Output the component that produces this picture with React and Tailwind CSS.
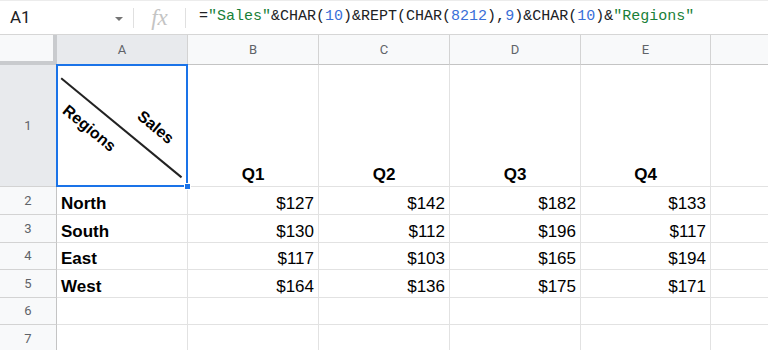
import React from 'react';

const cols = ['A', 'B', 'C', 'D', 'E'];

const data = [
  ['North', '$127', '$142', '$182', '$133'],
  ['South', '$130', '$112', '$196', '$117'],
  ['East', '$117', '$103', '$165', '$194'],
  ['West', '$164', '$136', '$175', '$171'],
];

const rowHeights = ['h-[28px]', 'h-[28px]', 'h-[27px]', 'h-[28px]', 'h-[27px]', 'h-[28px]'];

const cellFont = { fontFamily: '"Liberation Sans", Arial, sans-serif' };
const uiFont = { fontFamily: 'Roboto, "Liberation Sans", sans-serif' };

function FormulaBar() {
  return (
    <div className="flex h-[35px] items-center border-t border-b border-t-[#ececec] border-b-[#d6d6d6] bg-white">
      {/* name box */}
      <div className="flex w-[133px] items-center pl-[10px] pr-[10px]" style={uiFont}>
        <span className="text-[17px] text-[#202124]">A1</span>
        <span className="ml-auto mt-[2px] h-0 w-0 border-x-[4px] border-t-[4px] border-x-transparent border-t-[#757575]" />
      </div>
      <div className="h-[20px] w-px bg-[#e0e0e0]" />
      <div className="flex w-[51px] justify-center">
        <span
          className="text-[23px] italic leading-none text-[#c4c4c4]"
          style={{ fontFamily: '"Liberation Serif", serif' }}
        >
          fx
        </span>
      </div>
      <div className="h-[20px] w-px bg-[#e0e0e0]" />
      <div
        className="pl-[13px] text-[15px] whitespace-nowrap text-[#202124]"
        style={{ fontFamily: '"Liberation Mono", "DejaVu Sans Mono", monospace' }}
      >
        =<span className="text-[#188038]">"Sales"</span>&amp;CHAR(<span className="text-[#3a6fd8]">10</span>)&amp;REPT(CHAR(
        <span className="text-[#3a6fd8]">8212</span>),<span className="text-[#3a6fd8]">9</span>)&amp;CHAR(
        <span className="text-[#3a6fd8]">10</span>)&amp;<span className="text-[#188038]">"Regions"</span>
      </div>
    </div>
  );
}

function DiagonalCell() {
  return (
    <div className="relative h-full border-r border-b border-[#e2e2e2] bg-white">
      <div
        className="absolute left-[65px] top-[62px] w-[156px] -translate-x-1/2 -translate-y-1/2 rotate-[39.5deg] text-[16px] font-bold text-black"
        style={cellFont}
      >
        <div className="flex h-[42px] items-center justify-end pr-[31px]">Sales</div>
        <div className="flex h-[2px] items-center">
          <div className="h-[2px] w-full bg-[#222]" />
        </div>
        <div className="flex h-[40px] items-center pl-[22px]">Regions</div>
      </div>
      {/* selection */}
      <div className="pointer-events-none absolute -left-px -top-px -right-px -bottom-px border-2 border-[#1a73e8]" />
      <div className="absolute -right-[4px] -bottom-[4px] h-[7px] w-[7px] border border-white bg-[#1a73e8]" />
    </div>
  );
}

export default function App() {
  return (
    <div className="h-[350px] w-[768px] overflow-hidden bg-white">
      <FormulaBar />

      <div className="grid grid-cols-[57px_131px_131px_131px_131px_130px_1fr]">
        {/* column headers */}
        <div className="h-[30px] border-r-4 border-b-4 border-[#c9cbce] bg-[#f8f9fa]" />
        {cols.map((c) => (
          <div
            key={c}
            className={`flex h-[30px] items-center justify-center border-r border-b border-r-[#d3d3d3] border-b-[#c4c4c4] text-[13px] text-[#5f6368] ${
              c === 'A' ? 'bg-[#e8eaed]' : 'bg-[#f8f9fa]'
            }`}
            style={uiFont}
          >
            {c}
          </div>
        ))}
        <div className="h-[30px] border-b border-b-[#c4c4c4] bg-[#f8f9fa]" />

        {/* row 1 */}
        <div
          className="flex h-[122px] items-center justify-center border-r border-b border-r-[#c4c4c4] border-b-[#d3d3d3] bg-[#e8eaed] text-[13px] text-[#5f6368]"
          style={uiFont}
        >
          1
        </div>
        <div className="z-10 h-[122px]">
          <DiagonalCell />
        </div>
        {['Q1', 'Q2', 'Q3', 'Q4'].map((q) => (
          <div
            key={q}
            className="flex h-[122px] items-end justify-center border-r border-b border-[#e2e2e2] pb-[1px] text-[17px] leading-[20px] font-bold text-black"
            style={cellFont}
          >
            {q}
          </div>
        ))}
        <div className="h-[122px] border-b border-[#e2e2e2]" />

        {/* data rows */}
        {rowHeights.map((h, i) => {
          const row = data[i];
          return (
            <React.Fragment key={i}>
              <div
                className={`flex ${h} items-center justify-center border-r border-b border-r-[#c4c4c4] border-b-[#d3d3d3] bg-[#f8f9fa] text-[13px] text-[#5f6368]`}
                style={uiFont}
              >
                {i + 2}
              </div>
              {[0, 1, 2, 3, 4].map((j) => (
                <div
                  key={j}
                  className={`flex ${h} items-end border-r border-b border-[#e2e2e2] px-[4px] text-[17px] leading-[20px] text-black ${
                    j === 0 ? 'justify-start font-bold' : 'justify-end'
                  }`}
                  style={cellFont}
                >
                  {row ? row[j] : ''}
                </div>
              ))}
              <div className={`${h} border-b border-[#e2e2e2]`} />
            </React.Fragment>
          );
        })}
      </div>
    </div>
  );
}
